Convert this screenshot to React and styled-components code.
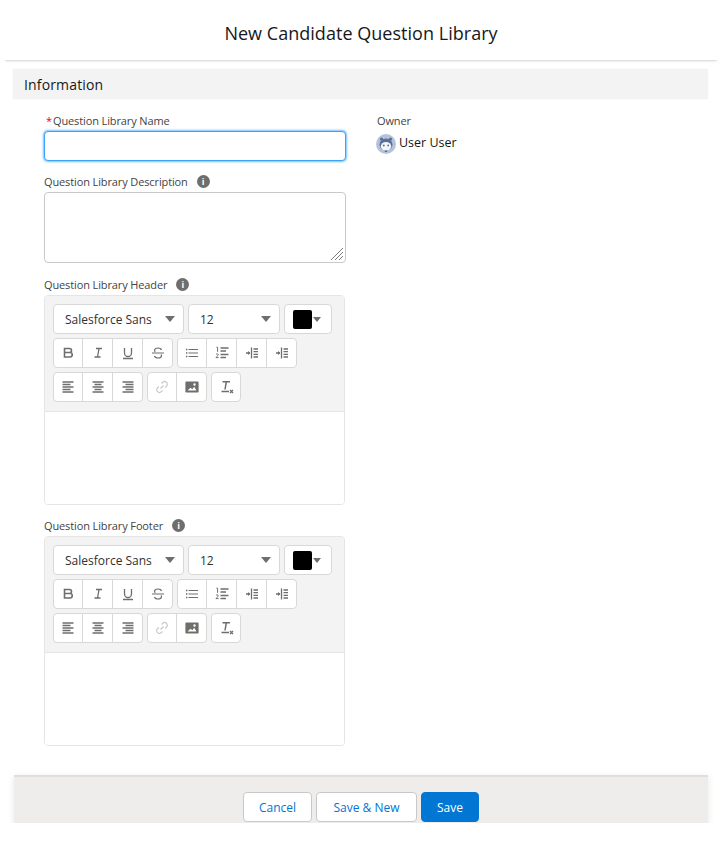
import React from "react";
import styled, { createGlobalStyle } from "styled-components";

const Global = createGlobalStyle`
  html, body { margin: 0; padding: 0; background: #fff; }
  body { font-family: "Open Sans", "Noto Sans", "Liberation Sans", sans-serif; color: #181818; }
`;

const Shell = styled.div`
  width: 712px;
  height: 819px;
  margin: 4px 5px 0;
  display: flex;
  flex-direction: column;
`;

const Header = styled.header`
  height: 57px;
  padding-top: 1px;
  box-sizing: border-box;
  display: flex;
  align-items: center;
  justify-content: center;
  border-bottom: 1px solid #e0e0e0;
  box-shadow: 0 2px 2px -1px rgba(0, 0, 0, 0.08);
`;

const Title = styled.h1`
  margin: 0;
  font-size: 18px;
  font-weight: 400;
  color: #16181c;
  letter-spacing: 0.03px;
`;

const SectionBar = styled.div`
  height: 30px;
  margin: 8px 9px 0 8px;
  padding-left: 11px;
  display: flex;
  align-items: center;
  background: #f3f3f3;
  box-shadow: 0 0 2px #f3f3f3;
  font-size: 14px;
  letter-spacing: 0.15px;
  color: #181818;
`;

const Form = styled.div`
  flex: 1;
  display: grid;
  grid-template-columns: 302px 1fr;
  column-gap: 31px;
  padding: 14px 0 0 39px;
  align-content: start;
`;

const Column = styled.div`
  display: flex;
  flex-direction: column;
  gap: 13px;
`;

const Field = styled.div`
  display: flex;
  flex-direction: column;
  gap: 2px;
`;

const Label = styled.div`
  height: 16px;
  box-sizing: border-box;
  padding-bottom: 1px;
  display: flex;
  align-items: center;
  font-size: 11px;
  letter-spacing: -0.12px;
  color: #444;
  padding-left: ${(p) => (p.$required ? "2px" : "0")};
`;

const Required = styled.span`
  color: #ea001e;
  margin-right: 1px;
`;

const InfoDot = styled.span`
  width: 13px;
  height: 13px;
  margin-left: 9px;
  border-radius: 50%;
  background: #706e6b;
  color: #fff;
  font-size: 9px;
  font-weight: 700;
  line-height: 13px;
  text-align: center;
  letter-spacing: 0;
`;

const TextInput = styled.div`
  box-sizing: border-box;
  height: 30px;
  border: 1px solid #3ba3f8;
  border-radius: 4px;
  background: #fff;
  box-shadow: 0 0 2px 1px rgba(27, 150, 255, 0.6);
`;

const TextArea = styled.div`
  position: relative;
  box-sizing: border-box;
  height: 71px;
  margin-bottom: 1px;
  border: 1px solid #c9c9c9;
  border-radius: 4px;
  background: #fff;
`;

const Grip = styled.svg`
  position: absolute;
  right: 1px;
  bottom: 1px;
  width: 14px;
  height: 14px;
`;

const Editor = styled.div`
  box-sizing: border-box;
  width: 301px;
  height: 210px;
  border: 1px solid #e5e5e5;
  border-radius: 4px;
  display: flex;
  flex-direction: column;
  overflow: hidden;
`;

const Toolbar = styled.div`
  height: 116px;
  box-sizing: border-box;
  padding: 8px 0 0 8px;
  background: #f3f3f3;
  border-bottom: 1px solid #e5e5e5;
  display: flex;
  flex-direction: column;
  gap: 4px;
`;

const ToolRow = styled.div`
  display: flex;
  gap: 4px;
`;

const Select = styled.div`
  box-sizing: border-box;
  width: ${(p) => p.$w}px;
  height: 30px;
  padding: 0 8px 0 11px;
  display: flex;
  align-items: center;
  justify-content: space-between;
  background: #fff;
  border: 1px solid #d8d8d8;
  border-radius: 4px;
  font-size: 12px;
  color: #32302e;
`;

const Caret = styled.span`
  width: 0;
  height: 0;
  border-left: 5.5px solid transparent;
  border-right: 5.5px solid transparent;
  border-top: 6px solid #706e6b;
`;

const ColorPicker = styled.div`
  box-sizing: border-box;
  width: 48px;
  height: 30px;
  padding-left: 8px;
  display: flex;
  align-items: center;
  gap: 1px;
  background: #fff;
  border: 1px solid #d8d8d8;
  border-radius: 4px;
`;

const Swatch = styled.span`
  width: 19px;
  height: 19px;
  background: #000;
  border-radius: 2px;
`;

const SmallCaret = styled(Caret)`
  border-left-width: 4.5px;
  border-right-width: 4.5px;
  border-top-width: 5px;
`;

const Group = styled.div`
  display: flex;
  background: #fff;
  border: 1px solid #d8d8d8;
  border-radius: 4px;
  height: 30px;
  box-sizing: border-box;
`;

const ToolButton = styled.div`
  box-sizing: border-box;
  width: 30px;
  display: flex;
  align-items: center;
  justify-content: center;
  color: ${(p) => (p.$off ? "#c9c7c5" : "#706e6b")};
  border-right: 1px solid #d8d8d8;
  &:first-child { width: 29px; }
  &:last-child { width: 29px; border-right: none; }
  &:only-child { width: 28px; padding-left: 1px; }
`;

const Body = styled.div`
  flex: 1;
  background: #fff;
`;

const OwnerValue = styled.div`
  display: flex;
  align-items: center;
  gap: 3px;
  margin-top: 1px;
  margin-left: -1px;
  font-size: 12.5px;
  color: #181818;
`;

const Avatar = styled.svg`
  width: 20px;
  height: 20px;
  flex: none;
  margin-top: 2px;
`;

const OwnerText = styled.span`
  margin-top: -2px;
`;

const Footer = styled.footer`
  box-sizing: border-box;
  height: 48px;
  margin: 0 9px;
  padding-top: 15px;
  display: flex;
  justify-content: center;
  gap: 4px;
  background: #eeedec;
  border-top: 2px solid #e0dfdd;
  box-shadow: 0 2px 6px 1px #eeedec;
`;

const Button = styled.div`
  box-sizing: border-box;
  width: ${(p) => p.$w}px;
  height: 30px;
  padding-top: 1px;
  display: flex;
  align-items: center;
  justify-content: center;
  font-size: 12px;
  border-radius: 4px;
  border: 1px solid ${(p) => (p.$primary ? "#0176d3" : "#c9c9c9")};
  background: ${(p) => (p.$primary ? "#0176d3" : "#fff")};
  color: ${(p) => (p.$primary ? "#fff" : "#0176d3")};
`;

const Icon = ({ children }) => (
  <svg width="14" height="14" viewBox="0 0 14 14" fill="none" stroke="currentColor" strokeWidth="1.2">
    {children}
  </svg>
);

const Bold = () => (
  <Icon>
    <path strokeWidth="1.6" d="M3.5 2.500h5a1.900 1.900 0 0 1 0 4h-5zM3.500 6.500h5.500a2.100 2.100 0 0 1 0 4.500H3.500z" />
  </Icon>
);
const Italic = () => (
  <Icon>
    <path strokeWidth="1.3" d="M5 2.500h6M3.500 11h6M8 2.500L6.500 11" />
  </Icon>
);
const Underline = () => (
  <Icon>
    <path strokeWidth="1.300" d="M3.500 2v5a3.500 3.500 0 0 0 7 0V2M2 12.500h10" />
  </Icon>
);
const Strike = () => (
  <Icon>
    <path d="M1 7h12M10.500 4C10.100 2.700 8.800 2 7 2 5 2 3.600 2.900 3.600 4.300c0 .6.200 1.100.6 1.600M10 8.500c.3.400.5.800.5 1.300C10.500 11.200 9 12 7 12c-1.800 0-3.100-.7-3.500-2" />
  </Icon>
);
const Bullets = () => (
  <Icon>
    <path strokeWidth="1.200" d="M3.500 3.500h9.500M3.500 7h9.500M3.500 10.500h9.500" />
    <path strokeWidth="1.400" d="M1 3.500h1.400M1 7h1.400M1 10.500h1.400" />
  </Icon>
);
const Numbers = () => (
  <Icon>
    <path strokeWidth="1.300" d="M5.500 2h8M5.500 5h5.500M5.500 8.500h8M5.500 11.500h5.500" />
    <path strokeWidth="1" d="M1.400 1.200h1.200v4.600M1 8.300c.6-.7 2.500-.5 2.300.6-.1.800-1.700 1.300-2.300 2.700h2.600" />
  </Icon>
);
const Indent = () => (
  <Icon>
    <path strokeWidth="1.300" d="M6.500 1.500v11M8.500 3h4.500M8.500 5.700h4.500M8.500 8.300h4.500M8.500 11h4.500M1 7h4" />
    <path fill="currentColor" stroke="none" d="M3 5l2.300 2L3 9z" />
  </Icon>
);
const AlignLeft = () => (
  <Icon>
    <path strokeWidth="1.300" d="M1.500 2h11M1.500 4.500h8M1.500 7h11M1.500 9.500h8M1.500 12h11" />
  </Icon>
);
const AlignCenter = () => (
  <Icon>
    <path strokeWidth="1.300" d="M1.500 2h11M3.500 4.500h7M1.500 7h11M3.500 9.500h7M1.500 12h11" />
  </Icon>
);
const AlignRight = () => (
  <Icon>
    <path strokeWidth="1.300" d="M1.500 2h11M4.500 4.500h8M1.500 7h11M4.500 9.500h8M1.500 12h11" />
  </Icon>
);
const LinkIcon = () => (
  <Icon>
    <path d="M5.500 8.500l3-3M6.500 3.500l1.200-1.200a2.600 2.600 0 0 1 3.800 3.800l-1.400 1.400M7.500 10.500l-1.200 1.200a2.600 2.600 0 0 1-3.800-3.800l1.400-1.400" />
  </Icon>
);
const ImageIcon = () => (
  <Icon>
    <path
      fill="currentColor"
      stroke="none"
      fillRule="evenodd"
      d="M1.200 1.500h11.600a.8.8 0 0 1 .8.8v9.400a.8.8 0 0 1-.8.8H1.200a.8.8 0 0 1-.8-.8V2.300a.8.8 0 0 1 .8-.8zM2.500 10.500h9L9.200 6.800 7.300 9.200 5.600 7.800zM9.500 3.300a1.200 1.200 0 1 0 0 2.400 1.200 1.200 0 0 0 0-2.400z"
    />
  </Icon>
);
const ClearFormat = () => (
  <Icon>
    <path strokeWidth="1.500" d="M2.500 1.800h7.500M6.300 1.800L5 9.500M1.500 11.500h7.500" />
    <path strokeWidth="1.300" d="M10 10l3 3M13 10l-3 3" />
  </Icon>
);

const Info = () => <InfoDot>i</InfoDot>;

const RichEditor = () => (
  <Editor>
    <Toolbar>
      <ToolRow>
        <Select $w={131}>
          Salesforce Sans
          <Caret />
        </Select>
        <Select $w={92}>
          12
          <Caret />
        </Select>
        <ColorPicker>
          <Swatch />
          <SmallCaret />
        </ColorPicker>
      </ToolRow>
      <ToolRow>
        <Group>
          <ToolButton><Bold /></ToolButton>
          <ToolButton><Italic /></ToolButton>
          <ToolButton><Underline /></ToolButton>
          <ToolButton><Strike /></ToolButton>
        </Group>
        <Group>
          <ToolButton><Bullets /></ToolButton>
          <ToolButton><Numbers /></ToolButton>
          <ToolButton><Indent /></ToolButton>
          <ToolButton><Indent /></ToolButton>
        </Group>
      </ToolRow>
      <ToolRow>
        <Group>
          <ToolButton><AlignLeft /></ToolButton>
          <ToolButton><AlignCenter /></ToolButton>
          <ToolButton><AlignRight /></ToolButton>
        </Group>
        <Group>
          <ToolButton $off><LinkIcon /></ToolButton>
          <ToolButton><ImageIcon /></ToolButton>
        </Group>
        <Group>
          <ToolButton><ClearFormat /></ToolButton>
        </Group>
      </ToolRow>
    </Toolbar>
    <Body />
  </Editor>
);

export default function App() {
  return (
    <>
      <Global />
      <Shell>
        <Header>
          <Title>New Candidate Question Library</Title>
        </Header>
        <SectionBar>Information</SectionBar>
        <Form>
          <Column>
            <Field>
              <Label $required>
                <Required>*</Required>Question Library Name
              </Label>
              <TextInput />
            </Field>
            <Field>
              <Label>
                Question Library Description
                <Info />
              </Label>
              <TextArea>
                <Grip viewBox="0 0 14 14" stroke="#706e6b" strokeWidth="0.9">
                  <path d="M1 13L13 1M5 13l8-8M9 13l4-4" />
                </Grip>
              </TextArea>
            </Field>
            <Field>
              <Label>
                Question Library Header
                <Info />
              </Label>
              <RichEditor />
            </Field>
            <Field>
              <Label>
                Question Library Footer
                <Info />
              </Label>
              <RichEditor />
            </Field>
          </Column>
          <Column>
            <Field>
              <Label>Owner</Label>
              <OwnerValue>
                <Avatar viewBox="0 0 20 20">
                  <circle cx="10" cy="10" r="10" fill="#b4c3dc" />
                  <circle cx="5.500" cy="5" r="1.600" fill="#5c6f96" />
                  <circle cx="14.500" cy="5" r="1.600" fill="#5c6f96" />
                  <ellipse cx="10" cy="10.500" rx="6.500" ry="6" fill="#5c6f96" />
                  <ellipse cx="10" cy="12.300" rx="5.200" ry="4.300" fill="#f4f6fa" />
                  <circle cx="7.800" cy="11.500" r="0.900" fill="#5c6f96" />
                  <circle cx="12.200" cy="11.500" r="0.900" fill="#5c6f96" />
                  <rect x="8.800" y="16.500" width="2.400" height="1.500" fill="#5c6f96" />
                </Avatar>
                <OwnerText>User User</OwnerText>
              </OwnerValue>
            </Field>
          </Column>
        </Form>
        <Footer>
          <Button $w={69}>Cancel</Button>
          <Button $w={101}>Save &amp; New</Button>
          <Button $w={58} $primary>Save</Button>
        </Footer>
      </Shell>
    </>
  );
}
